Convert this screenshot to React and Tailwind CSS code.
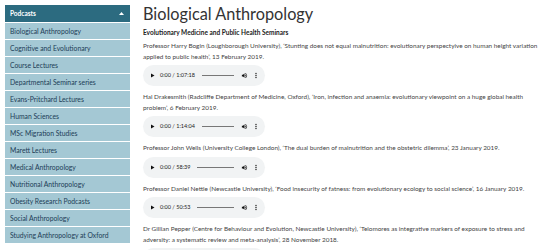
const links = [
  'Biological Anthropology',
  'Cognitive and Evolutionary',
  'Course Lectures',
  'Departmental Seminar series',
  'Evans-Pritchard Lectures',
  'Human Sciences',
  'MSc Migration Studies',
  'Marett Lectures',
  'Medical Anthropology',
  'Nutritional Anthropology',
  'Obesity Research Podcasts',
  'Social Anthropology',
  'Studying Anthropology at Oxford',
]

const talks = [
  {
    lines: [
      'Professor Harry Bogin (Loughborough University), ‘Stunting does not equal malnutrition: evolutionary perspectyive on human height variation',
      'applied to public health’, 13 February 2019.',
    ],
    length: '1:07:18',
  },
  {
    lines: [
      'Hal Drakesmith (Radcliffe Department of Medicine, Oxford), ‘Iron, infection and anaemia: evolutionary viewpoint on a huge global health',
      'problem’, 6 February 2019.',
    ],
    length: '1:14:04',
  },
  {
    lines: ['Professor John Wells (University College London), ‘The dual burden of malnutrition and the obstetric dilemma’, 23 January 2019.'],
    length: '58:39',
  },
  {
    lines: ['Professor Daniel Nettle (Newcastle University), ‘Food insecurity of fatness: from evolutionary ecology to social science’, 16 January 2019.'],
    length: '50:53',
  },
  {
    lines: [
      'Dr Gillian Pepper (Centre for Behaviour and Evolution, Newcastle University), ‘Telomores as integrative markers of exposure to stress and',
      'adversity: a systematic review and meta-analysis’, 28 November 2018.',
    ],
    length: '32:10',
  },
]

function AudioPill({ length }) {
  return (
    <div className="flex items-center w-[122px] h-[21px] rounded-full bg-[#f1f3f4] pl-[7px] pr-[8px] text-[5.5px] text-[#222]">
      <svg viewBox="0 0 10 10" className="w-[5px] h-[5px]">
        <path d="M2 1 L9 5 L2 9 Z" fill="#111" />
      </svg>
      <span className="ml-[5px] whitespace-nowrap">0:00 / {length}</span>
      <span className="flex-1 mx-[7px] h-px bg-[#777]" />
      {/* volume */}
      <svg viewBox="0 0 24 24" className="w-[7px] h-[7px]">
        <path d="M3 9v6h4l5 5V4L7 9H3zm13.5 3c0-1.77-1.02-3.290-2.5-4.03v8.05c1.48-.73 2.5-2.25 2.5-4.02zM14 3.230v2.06c2.89.86 5 3.54 5 6.71s-2.11 5.85-5 6.71v2.06c4.010-.91 7-4.49 7-8.770s-2.990-7.86-7-8.77z" fill="#111" />
      </svg>
      <svg viewBox="0 0 4 12" className="ml-[7px] w-[2px] h-[7px]">
        <circle cx="2" cy="2" r="1.3" fill="#111" />
        <circle cx="2" cy="6" r="1.3" fill="#111" />
        <circle cx="2" cy="10" r="1.3" fill="#111" />
      </svg>
    </div>
  )
}

export default function App() {
  return (
    <div className="w-[553px] h-[250px] overflow-hidden bg-white flex font-['Lato','Liberation_Sans',sans-serif]">
      {/* Sidebar */}
      <aside className="ml-[5px] mt-[5px] w-[125px] shrink-0">
        <div className="flex items-center justify-between h-[17px] bg-[#2c6b80] pl-[5px] pr-[6px] text-white text-[6.5px] font-bold">
          Podcasts
          <svg viewBox="0 0 10 6" className="w-[5px] h-[3px]">
            <path d="M0 6 L5 0 L10 6 Z" fill="#fff" />
          </svg>
        </div>
        {links.map((l) => (
          <div
            key={l}
            className="flex items-center h-[17px] bg-[#a4c8d4] border-t border-white pl-[5px] text-[6.8px] text-[#213d57] whitespace-nowrap"
          >
            {l}
          </div>
        ))}
      </aside>

      {/* Main */}
      <main className="ml-[13px] pt-[1px] text-[#333] min-w-0">
        <h1 className="text-[16.3px] leading-[26px] text-[#333] whitespace-nowrap">Biological Anthropology</h1>
        <h2 className="mt-[1px] text-[6.5px] leading-[9px] font-bold text-[#222]">
          Evolutionary Medicine and Public Health Seminars
        </h2>
        <div className="mt-[4px]">
          {talks.map((t, i) => (
            <div key={i} className="mb-[6px]">
              <p className="text-[6.4px] leading-[10.5px] whitespace-nowrap text-[#444]">
                {t.lines.map((line, j) => (
                  <span key={j} className="block">{line}</span>
                ))}
              </p>
              <div className="mt-[3px]">
                <AudioPill length={t.length} />
              </div>
            </div>
          ))}
        </div>
      </main>
    </div>
  )
}
